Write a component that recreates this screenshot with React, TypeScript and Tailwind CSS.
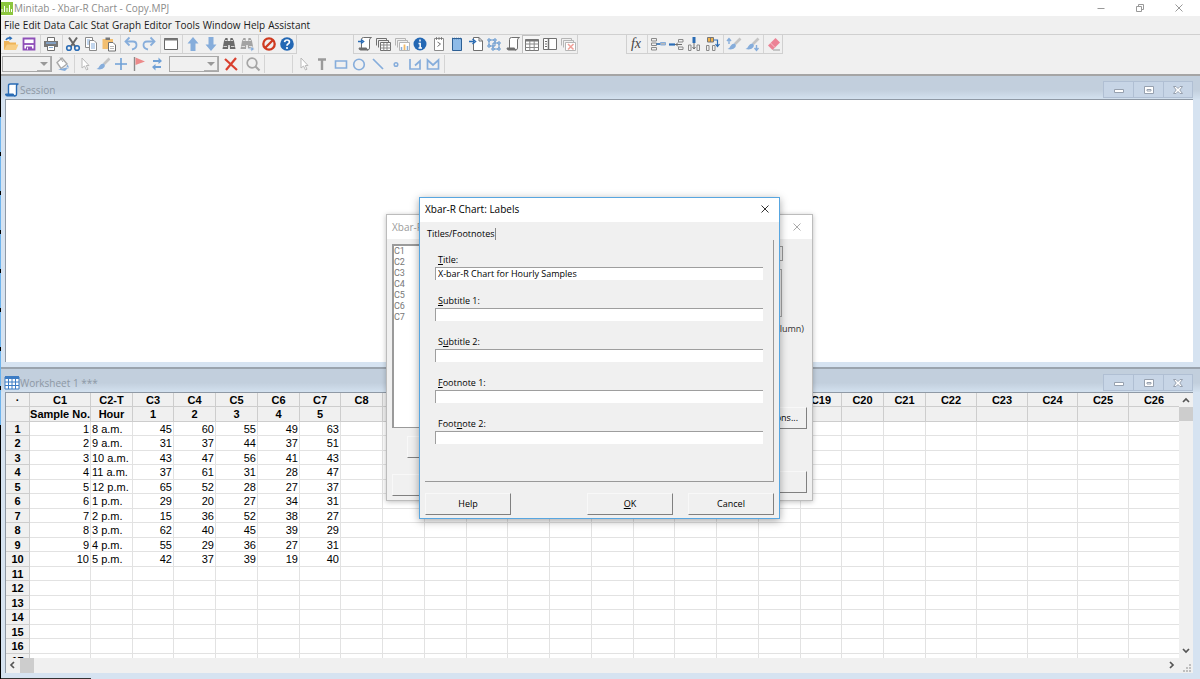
import type { ReactNode } from 'react'
import clsx from 'clsx'

const MENUS = ['File', 'Edit', 'Data', 'Calc', 'Stat', 'Graph', 'Editor', 'Tools', 'Window', 'Help', 'Assistant']

const ROWS = [
  ['8 a.m.', 45, 60, 55, 49, 63],
  ['9 a.m.', 31, 37, 44, 37, 51],
  ['10 a.m.', 43, 47, 56, 41, 43],
  ['11 a.m.', 37, 61, 31, 28, 47],
  ['12 p.m.', 65, 52, 28, 27, 37],
  ['1 p.m.', 29, 20, 27, 34, 31],
  ['2 p.m.', 15, 36, 52, 38, 27],
  ['3 p.m.', 62, 40, 45, 39, 29],
  ['4 p.m.', 55, 29, 36, 27, 31],
  ['5 p.m.', 42, 37, 39, 19, 40],
]

const NAMES = ['Sample No.', 'Hour', '1', '2', '3', '4', '5']
const COLUMNS = Array.from({ length: 26 }, (_, i) => (i === 1 ? 'C2-T' : `C${i + 1}`))

function columnWidth(i: number) {
  if (i === 0) return 61
  if (i === 1) return 42
  if (i < 21) return i % 4 === 2 ? 41 : 42
  return i === 23 ? 50 : 51
}

/* ---------- icons ---------- */

const BLUE = '#2a6cb5'
const SOFT = '#86addb'
const GRAY = '#6f6f6f'
const PALE = '#b9b9b9'

function Svg({ children, className = 'h-4 w-4' }: { children: ReactNode; className?: string }) {
  return (
    <svg viewBox="0 0 16 16" fill="none" className={className} aria-hidden="true">
      {children}
    </svg>
  )
}

const scroll = (
  <>
    <path d="M4.500 12V3.500Q4.500 1.500 6.500 1.500H14.500Q12.500 2 12.500 4V12Q12.500 14 10.500 14" fill="#fff" stroke={GRAY} />
    <path d="M2 12H9.500Q9.500 14 11 14H3.500Q2 14 2 12Z" fill={GRAY} stroke={GRAY} />
  </>
)

const brush = (
  <>
    <path d="M14.500 2.500L9 8" stroke="#c4c4c4" strokeWidth="2.600" />
    <path d="M9 7.500Q6 7 4.500 10Q3.500 12.500 1.500 13Q7.500 14.500 9.500 11Q10.500 9 9 7.500Z" fill={SOFT} />
  </>
)

const binoculars = (c: string) => (
  <>
    <path d="M3 5L4.500 2H6.500L7 5H9L9.500 2H11.500L13 5L14.500 13H9L8.700 9H7.300L7 13H1.500Z" fill={c} />
    <path d="M2.500 10.500H6M10 10.500H13.500M4 4.500H6.500M9.500 4.500H12" stroke="#f0f0f0" strokeWidth=".8" />
  </>
)

const stack = (c: string) => (
  <>
    <path d="M1.500 9.500V2.500H11.500V4.500M3.500 11.500V4.500H13.500V6.500" stroke={c} />
    <path d="M5.500 6.500H15.500V14.500H5.500Z" fill="#fff" stroke={c} />
  </>
)

const pointer = <path d="M5 2V12L7.500 10L9.500 14L11 13.200L9.200 9.500H12Z" stroke={PALE} fill="#fff" />

const ICONS: Record<string, ReactNode> = {
  'Open project': (
    <>
      <path d="M1 14V5H5.500L7 6.500H13V9" fill="#efb459" />
      <path d="M1 14L4 8.500H15.500L13 14Z" fill="#f8ce84" />
      <path d="M3 4Q4 1.500 7.500 2" stroke={BLUE} strokeWidth="1.600" />
      <path d="M6.500 0L9.500 2.200L6.500 4.500Z" fill={BLUE} />
    </>
  ),
  'Save project': (
    <>
      <path d="M2.500 2.500H13.500V13.500H2.500Z" fill="#fff" stroke="#8e4fb8" strokeWidth="1.800" />
      <path d="M3 8H13" stroke="#8e4fb8" strokeWidth="1.800" />
      <path d="M5 13.500V10.500H11V13.500" fill="#8e4fb8" />
      <path d="M6.500 11.500V13.500" stroke="#fff" />
    </>
  ),
  Print: (
    <>
      <path d="M4.500 5V1.500H11.500V5" fill="#fff" stroke={GRAY} />
      <path d="M1 5H15V11H1Z" fill="#777" />
      <path d="M3 7H13" stroke={SOFT} strokeWidth="1.500" />
      <path d="M4.500 9.500H11.500V14.500H4.500Z" fill="#fff" stroke={GRAY} />
      <path d="M6 11.500H10" stroke={SOFT} />
    </>
  ),
  Cut: (
    <>
      <path d="M4 1.500L10.500 11M12 1.500L5.500 11" stroke="#666" strokeWidth="2" />
      <circle cx="4" cy="12" r="2.300" stroke={BLUE} strokeWidth="1.600" />
      <circle cx="12" cy="12" r="2.300" stroke={BLUE} strokeWidth="1.600" />
    </>
  ),
  Copy: (
    <>
      <path d="M2.500 1.500H9.500V11.500H2.500Z" fill="#fff" stroke="#8a8a8a" />
      <path d="M6.500 4.500H11L13.500 7V14.500H6.500Z" fill="#fff" stroke="#8a8a8a" />
      <path d="M8 8H12M8 10H12M8 12H12M4 4H7M4 6H6M4 8H6" stroke={SOFT} />
    </>
  ),
  Paste: (
    <>
      <path d="M1.500 3H12V13H1.500Z" fill="#f3bf70" />
      <path d="M4.500 1.500H9V4H4.500Z" fill="#777" />
      <path d="M7.500 6.500H12L14.500 9V15H7.500Z" fill="#fff" stroke={GRAY} />
      <path d="M9 10.500H13M9 12.500H13" stroke={PALE} />
    </>
  ),
  Undo: (
    <>
      <path d="M3 5.500H10Q13.500 5.500 13.500 9Q13.500 12.500 9 13.500" stroke={SOFT} strokeWidth="1.800" />
      <path d="M6.500 1.500L2.500 5.500L6.500 9.500" stroke={SOFT} strokeWidth="1.800" />
    </>
  ),
  Redo: (
    <>
      <path d="M13 5.500H6Q2.500 5.500 2.500 9Q2.500 12.500 7 13.500" stroke={SOFT} strokeWidth="1.800" />
      <path d="M9.500 1.500L13.500 5.500L9.500 9.500" stroke={SOFT} strokeWidth="1.800" />
    </>
  ),
  'Last dialog': (
    <>
      <path d="M1.500 2.500H14.500V13.500H1.500Z" fill="#fff" stroke="#666" />
      <path d="M1 3.500H15" stroke="#777" strokeWidth="2" />
    </>
  ),
  'Previous command': <path d="M8 1L13.500 7.500H10.500V15H5.500V7.500H2.500Z" fill={SOFT} />,
  'Next command': <path d="M8 15L13.500 8.500H10.500V1H5.500V8.500H2.500Z" fill={SOFT} />,
  Find: binoculars('#6a6a6a'),
  Replace: (
    <>
      {binoculars('#a3a3a3')}
      <path d="M8 12.500H12V10.500L15.500 13L12 15.500V13.500" fill={SOFT} stroke="#f0f0f0" strokeWidth=".5" />
    </>
  ),
  Cancel: (
    <>
      <circle cx="8" cy="8" r="5.700" stroke="#cf3a20" strokeWidth="2.300" />
      <path d="M4 12L12 4" stroke="#cf3a20" strokeWidth="2.300" />
    </>
  ),
  Help: (
    <>
      <circle cx="8" cy="8" r="6.800" fill="#2468b4" />
      <path d="M5.600 6.200Q5.800 4 8 4Q10.400 4 10.400 6Q10.400 7.200 9 8Q8 8.600 8 9.800" stroke="#fff" strokeWidth="1.700" />
      <circle cx="8" cy="12" r="1.100" fill="#fff" />
    </>
  ),
  'Show session': (
    <>
      {scroll}
      <path d="M1 5.500H5M4 3.500L6.500 5.500L4 7.500" stroke={BLUE} strokeWidth="1.600" />
    </>
  ),
  'Show worksheets': (
    <>
      {stack('#707070')}
      <path d="M5.500 9H15.500M5.500 12H15.500M8.800 7V14.500M12 7V14.500" stroke="#8a8a8a" />
    </>
  ),
  'Show graphs': (
    <>
      {stack('#b5b5b5')}
      <path d="M7.500 14V11" stroke={SOFT} strokeWidth="1.500" />
      <path d="M10.500 14V8.500" stroke="#f0b968" strokeWidth="1.800" />
      <path d="M13.500 14V10" stroke={SOFT} strokeWidth="1.500" />
    </>
  ),
  Info: (
    <>
      <circle cx="8" cy="8" r="6.500" fill="#2468b4" />
      <path d="M8 3.500V5.500M6.500 7.500H8.200V12M6.500 12H10" stroke="#fff" strokeWidth="1.500" />
    </>
  ),
  History: (
    <>
      <path d="M3.500 2.500H12.500V14.500H3.500Z" fill="#fff" stroke="#8a8a8a" />
      <path d="M6.500 6L9.500 8L6.500 10.500" stroke={GRAY} />
      <path d="M5.500 1V4M8 1V4M10.500 1V4" stroke={GRAY} strokeWidth=".8" />
    </>
  ),
  'Report pad': (
    <>
      <path d="M3.500 2.500H12.500V14.500H3.500Z" fill="#8ebbe8" stroke="#2d5f94" />
      <path d="M3 2.500H13" stroke="#2d5f94" strokeWidth="1.500" strokeDasharray="1 1" />
    </>
  ),
  'Related documents': (
    <>
      <path d="M5.500 1.500H11L14.500 5V14.500H5.500Z" fill="#fff" stroke={GRAY} />
      <path d="M11 1.500V5H14.500" stroke={GRAY} />
      <path d="M1 5.500H6M4.500 3L7.500 5.500L4.500 8" stroke={BLUE} strokeWidth="1.500" />
    </>
  ),
  Design: (
    <>
      <path d="M3 4H9V10H3ZM7 7H13V13H7Z" stroke="#5e93cc" />
      <path d="M2 3H4V5H2ZM8 3H10V5H8ZM2 9H4V11H2ZM12 6H14V8H12ZM6 12H8V14H6ZM12 12H14V14H12Z" fill="#fff" stroke="#5e93cc" />
    </>
  ),
  Session: scroll,
  Worksheet: (
    <>
      <path d="M1.500 2.500H14.500V13.500H1.500Z" fill="#fff" stroke="#777" />
      <path d="M1.500 3.500H14.500" stroke="#777" strokeWidth="2" />
      <path d="M1.500 7H14.500M1.500 10.500H14.500M5.800 4V13.500M10.200 4V13.500" stroke="#8a8a8a" />
    </>
  ),
  'Project manager': (
    <>
      <path d="M1.500 2.500H14.500V13.500H1.500Z" fill="#fff" stroke="#707070" />
      <path d="M6.500 2.500V13.500" stroke="#707070" strokeWidth="1.500" />
      <path d="M3 5.500H5M3 8H5M3 10.500H5" stroke={GRAY} />
    </>
  ),
  'Close all graphs': (
    <>
      {stack('#b5b5b5')}
      <path d="M8 8L13.500 13.500M13.500 8L8 13.500" stroke="#f0a39b" strokeWidth="1.600" />
    </>
  ),
  'Insert cells': (
    <>
      <path d="M1.500 2.500H6.500V5H1.500ZM1.500 7H6.500V9.500H1.500ZM1.500 11.500H6.500V14H1.500Z" stroke="#8a8a8a" />
      <path d="M10.500 6.500H15.500V9H10.500Z" stroke={SOFT} fill="#b9b9b9" />
      <path d="M6.500 8H10" stroke={BLUE} strokeWidth="1.600" />
    </>
  ),
  'Insert rows': (
    <>
      <path d="M10.500 3.500H15V6H10.500ZM10.500 11H15V13.500H10.500Z" stroke="#8a8a8a" />
      <path d="M1 8.500H7" stroke={BLUE} strokeWidth="2.200" />
      <path d="M7 8.500H14M10 6.500L8 8.500L10 10.500" stroke={GRAY} />
    </>
  ),
  'Insert columns': (
    <>
      <path d="M2.500 9H5V14.500H2.500ZM11 9H13.500V14.500H11Z" stroke="#8a8a8a" />
      <path d="M8 1V7" stroke={BLUE} strokeWidth="3" />
      <path d="M8 7V13M6.500 11L8 13L9.500 11" stroke={GRAY} />
    </>
  ),
  'Move columns': (
    <>
      <path d="M2.500 9.500H5V14.500H2.500ZM8.500 9.500H11V14.500H8.500Z" stroke="#8a8a8a" />
      <path d="M3.500 1.500H9.500V6H3.500Z" fill="#f0b24d" stroke="#777" />
      <path d="M6.500 1.500V6" stroke="#777" />
      <path d="M10 4H13.500V10M11.500 8L13.500 10.500L15.500 8" stroke={BLUE} strokeWidth="1.200" />
    </>
  ),
  'Previous brushed row': (
    <>
      {brush}
      <path d="M3 8V3M1 5L3 2.500L5 5" stroke={SOFT} strokeWidth="1.400" />
    </>
  ),
  'Next brushed row': (
    <>
      {brush}
      <path d="M12.500 9V14M10.500 12L12.500 14.500L14.500 12" stroke={SOFT} strokeWidth="1.400" />
    </>
  ),
  'Clear cells': (
    <>
      <path d="M2 9.500L9.500 2L14 6.500L6.500 14Z" fill="#ec8295" />
      <path d="M4.500 7L9 11.500" stroke="#f6c3cb" />
      <path d="M7 14H14" stroke="#9a9a9a" />
    </>
  ),
  'Edit fill': (
    <>
      <path d="M2 6.500L7 2L12 8L6 12.500Z" fill="#fff" stroke="#aaa" strokeWidth="1.400" />
      <path d="M5 1.500L8 6" stroke="#aaa" />
      <path d="M12.500 8.500Q15 12 12.500 13Q10.500 12 12.500 8.500ZM3 13.500L10 15L14 11" fill={SOFT} />
    </>
  ),
  Select: pointer,
  Brush: brush,
  Crosshair: <path d="M8 2V14M2 8H14" stroke="#6fa0d6" strokeWidth="1.600" />,
  Flag: (
    <>
      <path d="M3.500 1V15" stroke="#8a8a8a" strokeWidth="1.400" />
      <path d="M4.500 1.500L14 5.500L4.500 9Z" fill="#ec8a8a" />
    </>
  ),
  Swap: (
    <>
      <path d="M4 5H12M4 11H12" stroke="#6fa0d6" strokeWidth="1.800" />
      <path d="M9.500 1.500L13 5L9.500 8ZM6.500 8L3 11L6.500 14.500Z" fill="#6fa0d6" />
    </>
  ),
  Delete: <path d="M2 3L14 14M13 2L3 14" stroke="#d9402f" strokeWidth="2.200" />,
  Zoom: (
    <>
      <circle cx="7" cy="7" r="4.800" stroke="#a5a5a5" strokeWidth="1.700" />
      <path d="M10.500 10.500L14.500 14.500" stroke="#a5a5a5" strokeWidth="2.200" />
    </>
  ),
  'Select item': pointer,
  Text: <path d="M4 3.500H12M8 3V14" stroke="#9a9a9a" strokeWidth="2.400" />,
  Rectangle: <path d="M2.500 5H13.500V12H2.500Z" stroke={SOFT} strokeWidth="1.600" />,
  Ellipse: <circle cx="8" cy="8.500" r="5.300" stroke={SOFT} strokeWidth="1.600" />,
  Line: <path d="M3 3L13 13" stroke={SOFT} strokeWidth="1.700" />,
  Marker: <circle cx="8" cy="8.500" r="1.800" stroke={SOFT} strokeWidth="1.500" />,
  Polygon: <path d="M3 3V13H13V5L8 9.500" stroke={SOFT} strokeWidth="1.700" />,
  Polyline: <path d="M2.500 13V4L8 9L13.500 4V13Z" stroke={SOFT} strokeWidth="1.700" />,
}

/* ---------- toolbars ---------- */

function ToolButton({ name, pressed }: { name: string; pressed?: boolean }) {
  return (
    <button
      type="button"
      aria-label={name}
      className={clsx(
        'flex h-[18px] w-[18px] shrink-0 items-center justify-center',
        pressed && 'border-t border-l border-[#c0c0c0] bg-[#f7f7f7]'
      )}
    >
      {name === 'Assign formula' ? (
        <span className="font-['Liberation_Serif',serif] text-[14px] leading-4 text-[#444] italic">fx</span>
      ) : (
        <Svg>{ICONS[name]}</Svg>
      )}
    </button>
  )
}

function Tools({ names }: { names: string[] }) {
  return names.map((name, i) =>
    name === '|' ? (
      <span key={i} className="flex h-[18px] w-1 shrink-0 justify-center">
        <span className="w-px bg-[#d4d4d4]" />
      </span>
    ) : (
      <ToolButton key={i} name={name} pressed={name === 'Worksheet'} />
    )
  )
}

function Combo({ label }: { label: string }) {
  return (
    <span className="relative block h-4 w-[50px] shrink-0 border border-[#a8a8a8]">
      <select aria-label={label} className="block h-full w-full appearance-none bg-[#f0f0f0]" />
      <span className="pointer-events-none absolute top-0 right-0 flex h-full w-[14px] items-center justify-center border-r border-b border-[#b0b0b0]">
        <svg viewBox="0 0 8 4" className="h-1 w-2" aria-hidden="true">
          <path d="M0 0H8L4 4Z" fill="#999" />
        </svg>
      </span>
    </span>
  )
}

function Toolbars() {
  return (
    <div className="border-b-2 border-[#a5a5a5] bg-[#f0f0f0]">
      <div className="flex h-5 items-center border-t border-[#d0d0d0]">
        <div className="flex h-full w-[297px] items-center border-r border-b border-[#d0d0d0] pl-0.5">
          <Tools
            names={['Open project', 'Save project', '|', 'Print', '|', 'Cut', 'Copy', 'Paste', '|', 'Undo', 'Redo', '|', 'Last dialog', '|', 'Previous command', 'Next command', 'Find', 'Replace', '|', 'Cancel', 'Help']}
          />
        </div>
        <div className="ml-14 flex h-full w-[225px] items-center justify-between border-r border-b border-l border-[#d0d0d0] pl-0.5">
          <Tools
            names={['Show session', 'Show worksheets', 'Show graphs', 'Info', 'History', 'Report pad', 'Related documents', 'Design', 'Session', 'Worksheet', 'Project manager', 'Close all graphs']}
          />
        </div>
        <div className="ml-12 flex h-full w-[157px] items-center border-r border-b border-l border-[#d0d0d0]">
          <Tools
            names={['Assign formula', '|', 'Insert cells', 'Insert rows', 'Insert columns', 'Move columns', '|', 'Previous brushed row', 'Next brushed row', '|', 'Clear cells']}
          />
        </div>
      </div>
      <div className="flex h-5 items-center pl-0.5">
        <Combo label="Fill pattern" />
        <div className="flex items-center pr-[3px] pl-0.5">
          <Tools names={['Edit fill', '|', 'Select', 'Brush', 'Crosshair', 'Flag', 'Swap']} />
        </div>
        <Combo label="Graph item" />
        <div className="flex items-center pl-[3px]">
          <Tools names={['Delete', '|', 'Zoom', '|']} />
        </div>
        <div className="ml-[26px] flex w-[153px] items-center justify-between border-r border-l border-[#d4d4d4] pr-0.5 pl-0.5">
          <Tools names={['Select item', 'Text', 'Rectangle', 'Ellipse', 'Line', 'Marker', 'Polygon', 'Polyline']} />
        </div>
      </div>
    </div>
  )
}

/* ---------- child windows ---------- */

function CaptionButton({ label, children }: { label: string; children: ReactNode }) {
  return (
    <button
      type="button"
      aria-label={label}
      className="flex h-[17px] w-[30px] items-center justify-center border border-r-0 border-[#b0bfd3] bg-[#c7d5e6] last:border-r"
    >
      <svg viewBox="0 0 12 10" fill="none" className="h-[10px] w-3" aria-hidden="true">
        {children}
      </svg>
    </button>
  )
}

function ChildWindow({ title, icon, className, children }: { title: string; icon: ReactNode; className: string; children: ReactNode }) {
  return (
    <section className={clsx('flex min-h-0 flex-col bg-[#d6e3f1]', className)}>
      <header className="flex shrink-0 grow-0 basis-[23px] items-end bg-linear-to-b from-[#c2cfdd] from-60% to-[#d3e1ef] pr-[7px] pl-1">
        <Svg className="mb-px h-4 w-4">{icon}</Svg>
        <h2 className="flex-1 text-[10px] leading-[18px] text-[#8d98a5]">{title}</h2>
        <div className="mb-px flex">
          <CaptionButton label={`Minimize ${title}`}>
            <path d="M1.500 4.500H10.500V7.500H1.500Z" fill="#fff" stroke="#97a1af" />
          </CaptionButton>
          <CaptionButton label={`Maximize ${title}`}>
            <path d="M1.500 1.500H10.500V8.500H1.500Z" fill="#fff" stroke="#97a1af" />
            <path d="M4 4.500H8V6H4Z" stroke="#97a1af" />
          </CaptionButton>
          <CaptionButton label={`Close ${title}`}>
            <path d="M1.500 1.500H4L6 3.500L8 1.500H10.500L7.800 5L10.500 8.500H8L6 6.500L4 8.500H1.500L4.200 5Z" fill="#fff" stroke="#97a1af" />
          </CaptionButton>
        </div>
      </header>
      <div className="flex min-h-0 flex-1 flex-col pr-[7px] pb-[5px] pl-[5px]">{children}</div>
    </section>
  )
}

function Chevron({ d, label }: { d: string; label: string }) {
  return (
    <button type="button" aria-label={label} className="flex h-[14px] w-[14px] items-center justify-center">
      <svg viewBox="0 0 8 8" fill="none" className="h-2 w-2" aria-hidden="true">
        <path d={d} stroke="#555" strokeWidth="1.700" />
      </svg>
    </button>
  )
}

function Grid() {
  const head = 'border-r border-b border-[#cdcdcd] bg-[#f0f0f0] p-0 text-center font-bold'
  return (
    <table className="w-px table-fixed border-separate border-spacing-0 font-['Liberation_Sans',Arial,sans-serif] text-[11px] leading-3 whitespace-nowrap text-black">
      <colgroup>
        <col style={{ width: 24 }} />
        {COLUMNS.map((c, i) => (
          <col key={c} style={{ width: columnWidth(i) }} />
        ))}
      </colgroup>
      <thead>
        <tr className="h-[14px]">
          <th className={head}>·</th>
          {COLUMNS.map((c) => (
            <th key={c} scope="col" className={head}>{c}</th>
          ))}
        </tr>
        <tr className="h-[15px]">
          <th className={head} />
          {COLUMNS.map((c, i) => (
            <th key={c} className={head}>{NAMES[i]}</th>
          ))}
        </tr>
      </thead>
      <tbody>
        {Array.from({ length: 17 }, (_, r) => (
          <tr key={r} className={r % 2 ? 'h-[15px]' : 'h-[14px]'}>
            <th scope="row" className={head}>{r + 1}</th>
            {COLUMNS.map((c, i) => (
              <td
                key={c}
                className={clsx('border-r border-b border-[#e2e2e2] bg-white p-0', i === 1 ? 'pl-px text-left' : 'pr-px text-right')}
              >
                {r < ROWS.length && (i === 0 ? r + 1 : ROWS[r][i - 1])}
              </td>
            ))}
          </tr>
        ))}
      </tbody>
    </table>
  )
}

/* ---------- dialogs ---------- */

function DialogButton({ children, className = 'w-[86px]' }: { children: ReactNode; className?: string }) {
  return (
    <button
      type="button"
      className={clsx('h-[22px] border border-t-[#f8f8f8] border-r-[#808080] border-b-[#808080] border-l-[#f8f8f8] bg-[#f0f0f0]', className)}
    >
      {children}
    </button>
  )
}

function CloseButton({ color }: { color: string }) {
  return (
    <button type="button" aria-label="Close" className="flex h-4 w-4 items-center justify-center">
      <svg viewBox="0 0 8 8" className="h-2 w-2" aria-hidden="true">
        <path d="M0.500 0.500L7.500 7.500M7.500 0.500L0.500 7.500" stroke={color} />
      </svg>
    </button>
  )
}

function ChartDialog() {
  return (
    <div
      role="dialog"
      aria-label="Xbar-R Chart"
      className="absolute top-[214px] left-[386px] flex h-[287px] w-[427px] flex-col border border-[#bcbcbc] bg-[#f0f0f0] text-[9px] shadow-[0_1px_5px_rgba(0,0,0,0.25)]"
    >
      <header className="flex h-6 shrink-0 items-center justify-between bg-white pr-[7px] pl-[5px]">
        <h2 className="text-[10px] text-[#9b9b9b]">Xbar-R Chart</h2>
        <CloseButton color="#aaa" />
      </header>
      <div className="flex flex-1 justify-between px-[5px] pt-[5px]">
        <div className="flex flex-col items-start">
          <ul className="h-[184px] w-[90px] border-t-2 border-b border-l-2 border-[#9a9a9a] bg-white font-[Roboto,sans-serif] text-[9px] leading-[11px] text-[#777]">
            {COLUMNS.slice(0, 7).map((_, i) => (
              <li key={i}>{`C${i + 1}`}</li>
            ))}
          </ul>
          <div className="mt-2 pl-[15px]">
            <DialogButton className="w-[70px]">Select</DialogButton>
          </div>
          <div className="mt-4">
            <DialogButton>Help</DialogButton>
          </div>
        </div>
        <div className="flex flex-col items-end">
          <select aria-label="Data layout" className="mt-0.5 mr-6 h-[15px] w-[200px] appearance-none border border-[#9a9a9a]" />
          <textarea aria-label="Variables" className="mt-2 mr-[25px] h-12 w-[200px] resize-none border border-[#a5a5a5]" />
          <p className="mt-[5px] mr-[3px] leading-[14px] text-[#333]">(use a constant or an ID column)</p>
          <div className="mt-[71px]">
            <DialogButton className="w-[100px] pr-2 text-right">Xbar-R Options...</DialogButton>
          </div>
          <div className="mt-[42px]">
            <DialogButton>Cancel</DialogButton>
          </div>
        </div>
      </div>
    </div>
  )
}

const FIELDS = [
  { id: 'title', label: <><u>T</u>itle:</>, value: 'X-bar-R Chart for Hourly Samples' },
  { id: 'subtitle1', label: <><u>S</u>ubtitle 1:</>, value: '' },
  { id: 'subtitle2', label: <>S<u>u</u>btitle 2:</>, value: '' },
  { id: 'footnote1', label: <><u>F</u>ootnote 1:</>, value: '' },
  { id: 'footnote2', label: <>Foot<u>n</u>ote 2:</>, value: '' },
]

function LabelsDialog() {
  return (
    <div
      role="dialog"
      aria-label="Xbar-R Chart: Labels"
      className="absolute top-[197px] left-[419px] flex h-[322px] w-[361px] flex-col border border-[#58a6e0] bg-[#f0f0f0] text-[9px] text-black shadow-[0_2px_8px_rgba(0,0,0,0.35)]"
    >
      <header className="flex h-6 shrink-0 items-center justify-between bg-white pr-1.5 pb-0.5 pl-[5px]">
        <h2 className="text-[10px]">Xbar-R Chart: Labels</h2>
        <CloseButton color="#333" />
      </header>
      <div className="px-[5px] pt-1.5">
        <div role="tablist" className="flex h-3">
          <button type="button" role="tab" aria-selected="true" className="border-r border-[#888] pl-0.5 leading-3">
            Titles/Footnotes
          </button>
        </div>
        <div className="flex h-[242px] flex-col gap-[14px] border-r border-b border-[#999] pt-[13px] pr-[10px] pl-[10px]">
          {FIELDS.map((f) => (
            <div key={f.id}>
              <label htmlFor={f.id} className="block h-[14px] pl-[3px] leading-[14px]">{f.label}</label>
              <input
                id={f.id}
                type="text"
                defaultValue={f.value}
                className="block h-[13px] w-full border-t border-l border-[#9e9e9e] bg-white pb-px pl-0.5 leading-3 outline-none"
              />
            </div>
          ))}
        </div>
        <div className="flex pt-[11px]">
          <DialogButton>Help</DialogButton>
          <div className="ml-auto flex gap-[15px]">
            <DialogButton><u>O</u>K</DialogButton>
            <DialogButton>Cancel</DialogButton>
          </div>
        </div>
      </div>
    </div>
  )
}

export default function App() {
  return (
    <div className="relative flex h-screen flex-col overflow-hidden bg-[#d6e3f1] font-['Open_Sans','Noto_Sans',sans-serif]">
      <header className="flex h-4 shrink-0 items-center bg-white">
        <svg viewBox="0 0 13 13" className="h-[13px] w-[13px]" aria-hidden="true">
          <path d="M0 0H13V13H0Z" fill="#8cc63f" />
          <path d="M2 7V10M4.500 4V10M7 6V10M9.500 3V10M11.500 7V10" stroke="#fff" />
        </svg>
        <h1 className="ml-px flex-1 text-[10px] leading-3 text-[#8c8c8c]">Minitab - Xbar-R Chart - Copy.MPJ</h1>
        <div className="flex gap-[31px] pr-[17px]">
          <button type="button" aria-label="Minimize" className="h-2 w-2">
            <svg viewBox="0 0 8 8" aria-hidden="true"><path d="M0.500 4.500H7.500" stroke="#999" /></svg>
          </button>
          <button type="button" aria-label="Restore" className="h-2 w-2">
            <svg viewBox="0 0 8 8" fill="none" aria-hidden="true">
              <path d="M0.500 2.500H5.500V7.500H0.500ZM2.500 2.500V0.500H7.500V5.500H5.500" stroke="#999" />
            </svg>
          </button>
          <button type="button" aria-label="Close" className="h-2 w-2">
            <svg viewBox="0 0 8 8" aria-hidden="true"><path d="M0.500 0.500L7.500 7.500M7.500 0.500L0.500 7.500" stroke="#999" /></svg>
          </button>
        </div>
      </header>

      <nav className="flex h-[18px] shrink-0 items-center gap-[3px] bg-[#f0f0f0] pl-1 text-[10px] text-[#1a1a1a]">
        {MENUS.map((m) => (
          <button key={m} type="button">{m}</button>
        ))}
      </nav>

      <Toolbars />

      <ChildWindow
        title="Session"
        className="h-[291px] shrink-0"
        icon={
          <>
            <path d="M4.500 12V3.500Q4.500 2 6.500 2H14.500Q12.500 2 12.500 4V12Q12.500 14 10.500 14" fill="#fff" stroke={BLUE} strokeWidth="1.400" />
            <path d="M1.500 12H9.500Q9.500 14 11 14H3Q1.500 14 1.500 12Z" fill={BLUE} stroke={BLUE} />
          </>
        }
      >
        <div className="flex-1 border-t border-l border-[#8f99a5] bg-white" />
      </ChildWindow>

      <ChildWindow
        title="Worksheet 1 ***"
        className="flex-1 border-t-2 border-[#9aa3ad]"
        icon={
          <>
            <path d="M1 2H15V14H1Z" fill="#fff" stroke="#3d7cc4" />
            <path d="M1 2.500H15" stroke="#3d7cc4" strokeWidth="3" />
            <path d="M1 7H15M1 10.500H15M4.500 2V14M8 2V14M11.500 2V14" stroke="#3d7cc4" />
          </>
        }
      >
        <div className="flex min-h-0 flex-1 flex-col border-t border-l border-[#8f99a5] bg-[#f0f0f0]">
          <div className="flex min-h-0 flex-1">
            <div className="min-w-0 flex-1 overflow-hidden bg-white">
              <Grid />
            </div>
            <div className="flex w-[14px] flex-col">
              <Chevron label="Scroll up" d="M1 6L4 3L7 6" />
              <div className="h-[14px] bg-[#cdcdcd]" />
              <div className="flex-1" />
              <Chevron label="Scroll down" d="M1 2L4 5L7 2" />
            </div>
          </div>
          <div className="flex h-[15px] shrink-0">
            <Chevron label="Scroll left" d="M5 1L2 4L5 7" />
            <div className="w-[14px] bg-[#cdcdcd]" />
            <div className="flex-1" />
            <Chevron label="Scroll right" d="M2 1L5 4L2 7" />
            <svg viewBox="0 0 14 15" className="h-[15px] w-[14px]" aria-hidden="true">
              <path d="M10 6H12V8H10ZM7 9H9V11H7ZM10 9H12V11H10ZM4 12H6V14H4ZM7 12H9V14H7ZM10 12H12V14H10Z" fill="#bfbfbf" />
            </svg>
          </div>
        </div>
      </ChildWindow>
      <div className="h-px w-[91px] shrink-0 bg-[#333]" />

      {/* sliver of the desktop behind the window */}
      <div className="absolute inset-y-0 left-0 w-px bg-black">
        <div className="mt-[117px] h-[312px] bg-[repeating-linear-gradient(to_bottom,#6db4ee_0_35px,#000_35px_39px)]" />
      </div>

      <ChartDialog />
      <LabelsDialog />
    </div>
  )
}
